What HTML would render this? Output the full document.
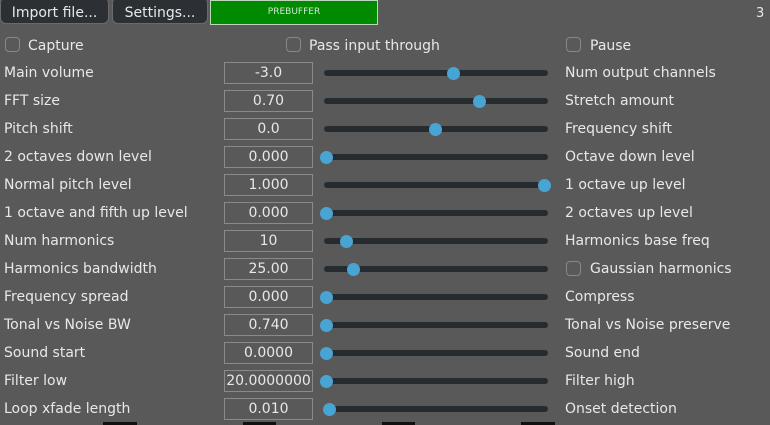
<!DOCTYPE html><html><head><style>
body{margin:0;width:770px;height:425px;background:#595959;font-family:"DejaVu Sans","Liberation Sans",sans-serif;color:#e8e8e8;overflow:hidden;position:relative;font-size:14px}
.a{position:absolute;white-space:nowrap;line-height:16px}
.btn{position:absolute;top:-3px;height:27px;background:#2c3035;border:1px solid #6a6a6a;border-radius:6px;box-sizing:border-box;color:#e8e8e8;font-size:14px;text-align:center;line-height:30px}
.cb{position:absolute;width:15px;height:15px;border:1px solid #888;border-radius:4px;box-sizing:border-box}
.box{position:absolute;left:224px;width:89px;height:22px;border:1px solid #8a8a8a;box-sizing:border-box;text-align:center;line-height:21px;font-size:14px}
.tr{position:absolute;left:324px;width:224px;height:6px;border-radius:3px;background:#262b30}
.k{position:absolute;width:13px;height:13px;border-radius:50%;background:#48a4d2}
</style></head><body>
<div class="btn" style="left:0;width:109px">Import file...</div>
<div class="btn" style="left:112px;width:96px">Settings...</div>
<div class="a" style="left:210px;top:0;width:168px;height:25px;background:#008a00;border:1px solid #bcd8bc;box-sizing:border-box;text-align:center;font-size:9px;line-height:23px;color:#cfe8cf">PREBUFFER</div>
<div class="a" style="left:756px;top:6px;font-size:13px">3</div>
<div class="cb" style="left:5px;top:37px"></div><div class="a" style="left:28px;top:38px">Capture</div>
<div class="cb" style="left:286px;top:37px"></div><div class="a" style="left:309px;top:38px">Pass input through</div>
<div class="cb" style="left:566px;top:37px"></div><div class="a" style="left:590px;top:38px">Pause</div>
<div id="rows"></div>
<div class="a" style="left:103px;top:422px;width:34px;height:3px;background:#111"></div>
<div class="a" style="left:243px;top:422px;width:33px;height:3px;background:#111"></div>
<div class="a" style="left:382px;top:422px;width:33px;height:3px;background:#111"></div>
<div class="a" style="left:521px;top:422px;width:34px;height:3px;background:#111"></div>
<script>
var R=[["Main volume","-3.0",453,"Num output channels"],["FFT size","0.70",479,"Stretch amount"],["Pitch shift","0.0",435,"Frequency shift"],["2 octaves down level","0.000",326,"Octave down level"],["Normal pitch level","1.000",544,"1 octave up level"],["1 octave and fifth up level","0.000",326,"2 octaves up level"],["Num harmonics","10",346,"Harmonics base freq"],["Harmonics bandwidth","25.00",353,"*Gaussian harmonics"],["Frequency spread","0.000",326,"Compress"],["Tonal vs Noise BW","0.740",326,"Tonal vs Noise preserve"],["Sound start","0.0000",326,"Sound end"],["Filter low","20.0000000",326,"Filter high"],["Loop xfade length","0.010",329,"Onset detection"]];
var h="";R.forEach(function(r,i){var c=73+28*i;
h+='<div class="a" style="left:4px;top:'+(c-8)+'px">'+r[0]+'</div>';
h+='<div class="box" style="top:'+(c-11)+'px">'+r[1]+'</div>';
h+='<div class="tr" style="top:'+(c-3)+'px"></div>';
h+='<div class="k" style="left:'+(r[2]-6)+'px;top:'+(c-6)+'px"></div>';
if(r[3][0]=="*"){h+='<div class="cb" style="left:566px;top:'+(c-8)+'px"></div><div class="a" style="left:590px;top:'+(c-8)+'px">'+r[3].slice(1)+'</div>';}
else h+='<div class="a" style="left:565px;top:'+(c-8)+'px">'+r[3]+'</div>';});
document.getElementById("rows").innerHTML=h;
</script>
</body></html>
